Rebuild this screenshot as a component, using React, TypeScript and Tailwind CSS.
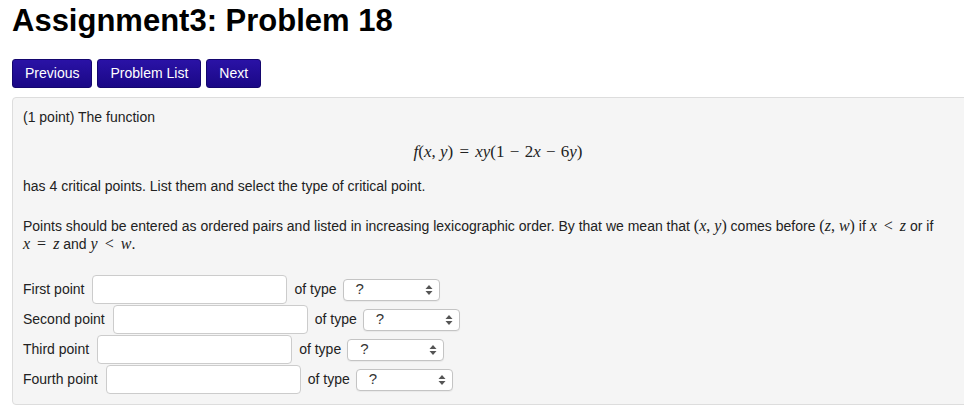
const serif = { fontFamily: '"Liberation Serif", "Times New Roman", serif' }

function MathI({ children }: { children: React.ReactNode }) {
  return <span className="italic" style={serif}>{children}</span>
}

function Rel({ children }: { children: React.ReactNode }) {
  return <span className="mx-[3px]" style={serif}>{children}</span>
}

function TypeSelect() {
  return (
    <div className="ml-[6px] flex h-[22px] w-[97px] items-center justify-between rounded-[4px] border border-[#c4c4c4] bg-white pl-[12px] pr-[6px] shadow-[0_1px_1px_rgba(0,0,0,0.05)]">
      <span className="text-[15px] text-[#333]">?</span>
      <svg width="8" height="12" viewBox="0 0 8 12">
        <path d="M4 1 L7.5 5 L0.5 5 Z" fill="#555" />
        <path d="M4 11 L7.5 7 L0.5 7 Z" fill="#555" />
      </svg>
    </div>
  )
}

function PointRow({ label }: { label: string }) {
  return (
    <div className="flex h-[30px] items-start">
      <div className="flex h-[29px] items-center">
        <span>{label}</span>
        <div className="ml-[8px] h-[29px] w-[195px] rounded-[4px] border border-[#cccccc] bg-white" />
        <span className="ml-[7px]">of type</span>
        <TypeSelect />
      </div>
    </div>
  )
}

export default function App() {
  return (
    <div className="w-[964px] h-[419px] overflow-hidden bg-white text-[#222]" style={{ fontFamily: '"Liberation Sans", Arial, sans-serif' }}>
      <h1 className="pl-[12px] pt-[3px] text-[31px] font-bold leading-[36px] text-black">Assignment3: Problem 18</h1>
      <div className="mt-[20px] flex gap-[5px] pl-[12px]">
        {['Previous', 'Problem List', 'Next'].map((b) => (
          <div key={b} className="flex h-[29px] items-center rounded-[3px] border border-[#14066e] bg-gradient-to-b from-[#2a12a6] to-[#1a0886] px-[12px] text-[14px] text-white">
            {b}
          </div>
        ))}
      </div>
      <div className="ml-[12px] mt-[9px] w-[972px] rounded-[4px] border border-[#dddddd] bg-[#f5f5f5] px-[10px] pt-[10px] pb-[9px] text-[14px]">
        <p className="leading-[18px]">(1 point) The function</p>
        <p className="mt-[17px] text-center text-[17px] leading-[18px]" style={serif}>
          <i>f</i>(<i>x</i>, <i>y</i>)<span className="mx-[2px]"> = </span><i>xy</i>(1<span className="mx-[1px]"> − </span>2<i>x</i><span className="mx-[1px]"> − </span>6<i>y</i>)
        </p>
        <p className="mt-[16px] leading-[18px]">has 4 critical points. List them and select the type of critical point.</p>
        <p className="mt-[22px] leading-[17px]">
          Points should be entered as ordered pairs and listed in increasing lexicographic order. By that we mean that{' '}
          <span className="text-[16px]" style={serif}>(<i>x</i>, <i>y</i>)</span> comes before{' '}
          <span className="text-[16px]" style={serif}>(<i>z</i>, <i>w</i>)</span> if{' '}
          <span className="text-[16px]"><MathI>x</MathI><Rel> &lt; </Rel><MathI>z</MathI></span> or if
          <br />
          <span className="text-[16px]"><MathI>x</MathI><Rel> = </Rel><MathI>z</MathI></span> and{' '}
          <span className="text-[16px]"><MathI>y</MathI><Rel> &lt; </Rel><MathI>w</MathI>.</span>
        </p>
        <div className="mt-[22px]">
          <PointRow label="First point" />
          <PointRow label="Second point" />
          <PointRow label="Third point" />
          <PointRow label="Fourth point" />
        </div>
      </div>
    </div>
  )
}
